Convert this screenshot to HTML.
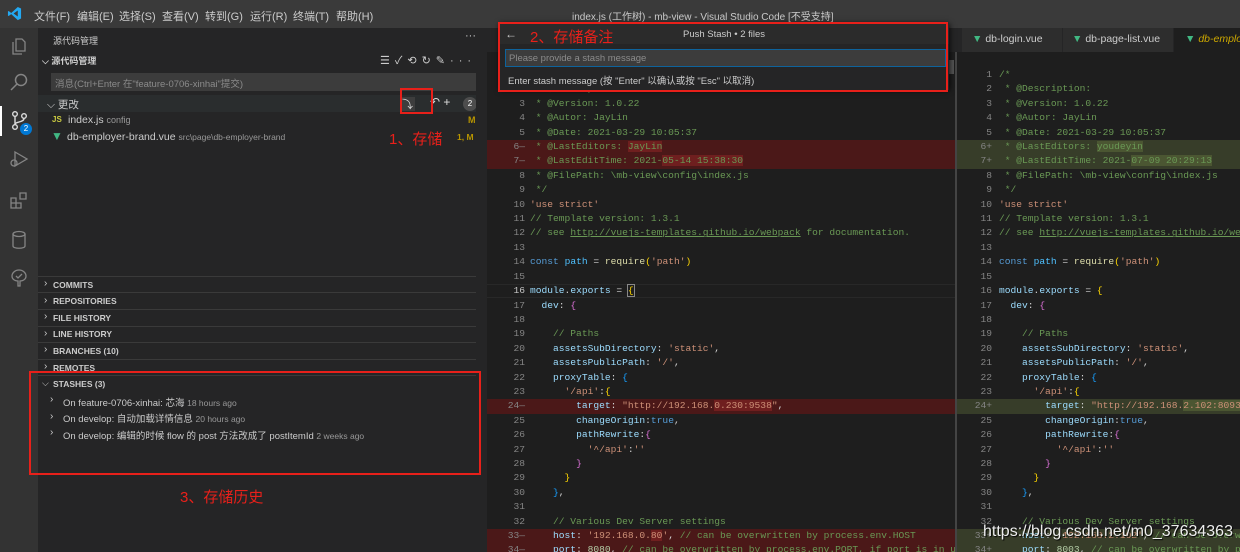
<!DOCTYPE html>
<html style="overflow:hidden"><head><meta charset="utf-8"><style>
*{margin:0;padding:0;box-sizing:border-box}
body{width:1240px;height:552px;overflow:hidden;background:#1e1e1e;font-family:"Liberation Sans","Noto Sans CJK SC",sans-serif;color:#ccc;position:relative}
.a{position:absolute}
.title{left:0;top:0;width:1240px;height:28px;background:#3a3a3a;font-size:11px;color:#ccc}
.title span{position:absolute;top:8px}
.act{left:0;top:28px;width:38px;height:524px;background:#333}
.side{left:38px;top:28px;width:449px;height:524px;background:#252526}
.t{position:absolute;white-space:nowrap}
pre{position:absolute;font-family:"Liberation Mono",monospace;font-size:9.6px;line-height:14.4px;color:#d4d4d4}
.c{color:#6a9955}.s{color:#ce9178}.k{color:#569cd6}.v{color:#9cdcfe}.f{color:#dcdcaa}.m{color:#4fc1ff}.y{color:#ffd700}.p{color:#da70d6}.b{color:#179fff}.n{color:#b5cea8}
.ln{color:#858585;text-align:right}
.hdr{font-size:8.5px;font-weight:bold;color:#ccc;position:absolute;left:53px}
.sep{position:absolute;left:38px;width:438px;height:1px;background:#3a3a3a}
.clip{position:absolute;overflow:hidden}
</style></head><body>
<div class="a title">
<svg class="a" style="left:7px;top:6px" width="15" height="15" viewBox="0 0 16 16"><path d="M11.5 1 L15 2.7 V13.3 L11.5 15 L4.5 8.6 L1.8 10.7 L1 10.2 V5.8 L1.8 5.3 L4.5 7.4 Z M11.5 4.8 L7 8 L11.5 11.2Z" fill="#23a9f2"/></svg>
<span style="left:34px">文件(F)</span><span style="left:77px">编辑(E)</span><span style="left:119px">选择(S)</span><span style="left:162px">查看(V)</span><span style="left:205px">转到(G)</span><span style="left:250px">运行(R)</span><span style="left:293px">终端(T)</span><span style="left:336px">帮助(H)</span>
<span style="left:572px;font-size:10px">index.js (工作树) - mb-view - Visual Studio Code [不受支持]</span>
</div>
<div class="a act">
<svg class="a" style="left:9px;top:8px" width="20" height="20" viewBox="0 0 20 20" fill="none" stroke="#858585" stroke-width="1.3"><path d="M7 3h6l3 3v9H7z M4 6v12h9"/></svg>
<svg class="a" style="left:9px;top:44px" width="20" height="20" viewBox="0 0 20 20" fill="none" stroke="#858585" stroke-width="1.5"><circle cx="12" cy="8" r="5.5"/><path d="M8 12l-6 6"/></svg>
<div class="a" style="left:0;top:78px;width:2px;height:30px;background:#fff"></div>
<svg class="a" style="left:10px;top:82px" width="20" height="22" viewBox="0 0 20 22" fill="none" stroke="#ddd" stroke-width="1.4"><circle cx="5" cy="4" r="2.3"/><circle cx="14" cy="6" r="2.3"/><circle cx="5" cy="17" r="2.3"/><path d="M5 6.5v8 M14 8.5c0 4-9 3-9 6"/></svg>
<div class="a" style="left:20px;top:95px;width:12px;height:12px;border-radius:6px;background:#0078d4;font-size:8px;color:#fff;text-align:center;line-height:12px">2</div>
<svg class="a" style="left:9px;top:121px" width="20" height="20" viewBox="0 0 20 20" fill="none" stroke="#858585" stroke-width="1.3"><path d="M6 3l12 7-12 7z"/><circle cx="5" cy="14" r="3"/></svg>
<svg class="a" style="left:9px;top:162px" width="20" height="20" viewBox="0 0 20 20" fill="none" stroke="#858585" stroke-width="1.3"><path d="M2 8h5v5H2z M7 13h5v5H7z M2 13h5v5H2z M11 3h6v6h-6z"/></svg>
<svg class="a" style="left:10px;top:202px" width="18" height="20" viewBox="0 0 18 20" fill="none" stroke="#858585" stroke-width="1.3"><ellipse cx="9" cy="4" rx="6" ry="2.5"/><path d="M3 4v12c0 3 12 3 12 0V4"/></svg>
<svg class="a" style="left:9px;top:240px" width="20" height="20" viewBox="0 0 20 20" fill="none" stroke="#858585" stroke-width="1.3"><path d="M10 2c4 0 7 3 7 6 0 4-4 5-6 5v5H9v-5c-2 0-6-1-6-5 0-3 3-6 7-6z M7 8l2 2 4-4"/></svg>
</div>
<div class="a side">
<div class="t" style="left:15px;top:6px;font-size:9px">源代码管理</div>
<div class="t" style="left:427px;top:2px;font-size:11px">···</div>
<div class="t" style="left:4px;top:26px;font-size:9px;font-weight:bold">⌵ 源代码管理</div>
<div class="t" style="left:342px;top:24px;font-size:11px;color:#ccc;letter-spacing:5px">☰✓⟲↻✎···</div>
<div class="a" style="left:13px;top:45px;width:425px;height:18px;background:#3c3c3c"></div>
<div class="t" style="left:17px;top:48px;font-size:9.5px;color:#8b8b8b">消息(Ctrl+Enter 在"feature-0706-xinhai"提交)</div>
<div class="a" style="left:0;top:67px;width:449px;height:17px;background:#2a2d2e"></div>
<div class="t" style="left:9px;top:69px;font-size:10.5px">⌵ 更改</div>
<div class="a" style="left:363px;top:69px;width:14px;height:14px;background:#3d3d3d"></div>
<div class="t" style="left:364px;top:68px;font-size:11px;color:#ddd">⤵</div>
<div class="t" style="left:392px;top:67px;font-size:12px;color:#ddd">↶ +</div>
<div class="a" style="left:425px;top:69px;width:14px;height:14px;border-radius:7px;background:#4d4d4d;font-size:8px;color:#fff;text-align:center;line-height:14px">2</div>
<div class="t" style="left:14px;top:87px;font-size:8px;font-weight:bold;color:#cbcb41">JS</div>
<div class="t" style="left:30px;top:86px;font-size:10.5px">index.js <span style="font-size:9px;color:#999">config</span></div>
<div class="t" style="left:430px;top:87px;font-size:9px;font-weight:bold;color:#b89500">M</div>
<div class="t" style="left:13px;top:101px;font-size:12px;color:#41b883">▼</div>
<div class="t" style="left:29px;top:103px;font-size:10.5px">db-employer-brand.vue <span style="font-size:8.5px;color:#999">src\page\db-employer-brand</span></div>
<div class="t" style="left:419px;top:104px;font-size:8.5px;font-weight:bold;color:#b89500">1, M</div>
<div class="a" style="left:438px;top:0;width:11px;height:524px;background:#252526"></div>
</div>
<div class="sep" style="top:276px"></div><div class="sep" style="top:292px"></div><div class="sep" style="top:309px"></div><div class="sep" style="top:326px"></div><div class="sep" style="top:342px"></div><div class="sep" style="top:359px"></div><div class="sep" style="top:375px"></div>
<div class="t" style="left:44px;top:278px;font-size:10px">›</div><div class="hdr" style="top:280px">COMMITS</div>
<div class="t" style="left:44px;top:295px;font-size:10px">›</div><div class="hdr" style="top:296px">REPOSITORIES</div>
<div class="t" style="left:44px;top:311px;font-size:10px">›</div><div class="hdr" style="top:313px">FILE HISTORY</div>
<div class="t" style="left:44px;top:328px;font-size:10px">›</div><div class="hdr" style="top:329px">LINE HISTORY</div>
<div class="t" style="left:44px;top:344px;font-size:10px">›</div><div class="hdr" style="top:346px">BRANCHES (10)</div>
<div class="t" style="left:44px;top:361px;font-size:10px">›</div><div class="hdr" style="top:363px">REMOTES</div>
<div class="t" style="left:42px;top:378px;font-size:9px">⌵</div><div class="hdr" style="top:379px">STASHES (3)</div>
<div class="t" style="left:50px;top:394px;font-size:10px">›</div><div class="t" style="left:63px;top:395px;font-size:9.5px">On feature-0706-xinhai: 芯海 <span style="font-size:8.5px;color:#999">18 hours ago</span></div>
<div class="t" style="left:50px;top:411px;font-size:10px">›</div><div class="t" style="left:63px;top:411px;font-size:9.5px">On develop: 自动加载详情信息 <span style="font-size:8.5px;color:#999">20 hours ago</span></div>
<div class="t" style="left:50px;top:427px;font-size:10px">›</div><div class="t" style="left:63px;top:428px;font-size:9.5px">On develop: 编辑的时候 flow 的 post 方法改成了 postItemId <span style="font-size:8.5px;color:#999">2 weeks ago</span></div>

<!-- editors -->
<div class="a" style="left:487px;top:28px;width:753px;height:24px;background:#252526"></div>
<div class="a" style="left:962px;top:28px;width:100px;height:24px;background:#2d2d2d"></div>
<div class="a" style="left:1063px;top:28px;width:110px;height:24px;background:#2d2d2d"></div>
<div class="a" style="left:1174px;top:28px;width:66px;height:24px;background:#1e1e1e"></div>
<div class="clip" style="left:962px;top:28px;width:278px;height:24px">
<div class="t" style="left:10px;top:5px;font-size:10.5px"><span style="color:#41b883">▼</span> db-login.vue</div>
<div class="t" style="left:110px;top:5px;font-size:10.5px"><span style="color:#41b883">▼</span> db-page-list.vue</div>
<div class="t" style="left:223px;top:5px;font-size:10.5px;color:#cca700;font-style:italic"><span style="color:#41b883;font-style:normal">▼</span> db-employer</div>
</div>
<div class="a" style="left:955px;top:52px;width:2px;height:500px;background:#444"></div>
<div class="a" style="left:948px;top:60px;width:6px;height:14px;background:#555"></div>

<div class="clip" style="left:487px;top:52px;width:468px;height:500px">
<div class="a" style="left:0;top:88px;width:468px;height:28.8px;background:#4b1818"></div>
<div class="a" style="left:0;top:347.2px;width:468px;height:14.4px;background:#4b1818"></div>
<div class="a" style="left:0;top:476.8px;width:468px;height:28.8px;background:#4b1818"></div>
<div class="a" style="left:0;top:232px;width:468px;height:14.4px;border-top:1px solid #282828;border-bottom:1px solid #282828"></div>
<pre class="ln" style="left:8px;top:16px;width:30px">1
2
3
4
5
6—
7—
8
9
10
11
12
13
14
15
<span style="color:#c6c6c6">16</span>
17
18
19
20
21
22
23
24—
25
26
27
28
29
30
31
32
33—
34—</pre>
<pre style="left:43px;top:16px"><span class="c">/*
 * @Description:
 * @Version: 1.0.22
 * @Autor: JayLin
 * @Date: 2021-03-29 10:05:37
 * @LastEditors: <span style="background:#6f1f1f">JayLin</span>
 * @LastEditTime: 2021-<span style="background:#6f1f1f">05-14 15:38:30</span>
 * @FilePath: \mb-view\config\index.js
 */</span>
<span class="s">'use strict'</span>
<span class="c">// Template version: 1.3.1</span>
<span class="c">// see <u>http://vuejs-templates.github.io/webpack</u> for documentation.</span>

<span class="k">const</span> <span class="m">path</span> = <span class="f">require</span><span class="y">(</span><span class="s">'path'</span><span class="y">)</span>

<span class="v">module</span>.<span class="v">exports</span> = <span class="y" style="outline:1px solid #888">{</span>
  <span class="v">dev</span>: <span class="p">{</span>

    <span class="c">// Paths</span>
    <span class="v">assetsSubDirectory</span>: <span class="s">'static'</span>,
    <span class="v">assetsPublicPath</span>: <span class="s">'/'</span>,
    <span class="v">proxyTable</span>: <span class="b">{</span>
      <span class="s">'/api'</span>:<span class="y">{</span>
        <span class="v">target</span>: <span class="s">"http://192.168.<span style="background:#6f1f1f">0.230:9538</span>"</span>,
        <span class="v">changeOrigin</span>:<span class="k">true</span>,
        <span class="v">pathRewrite</span>:<span class="p">{</span>
          <span class="s">'^/api'</span>:<span class="s">''</span>
        <span class="p">}</span>
      <span class="y">}</span>
    <span class="b">}</span>,

    <span class="c">// Various Dev Server settings</span>
    <span class="v">host</span>: <span class="s">'192.168.0.<span style="background:#6f1f1f">80</span>'</span>, <span class="c">// can be overwritten by process.env.HOST</span>
    <span class="v">port</span>: <span class="n">8080</span>, <span class="c">// can be overwritten by process.env.PORT, if port is in use</span></pre>
</div>

<div class="clip" style="left:957px;top:52px;width:283px;height:500px">
<div class="a" style="left:0;top:88px;width:283px;height:28.8px;background:#373d29"></div>
<div class="a" style="left:0;top:347.2px;width:283px;height:14.4px;background:#373d29"></div>
<div class="a" style="left:0;top:476.8px;width:283px;height:28.8px;background:#373d29"></div>
<pre class="ln" style="left:5px;top:16px;width:30px">1
2
3
4
5
6+
7+
8
9
10
11
12
13
14
15
16
17
18
19
20
21
22
23
24+
25
26
27
28
29
30
31
32
33+
34+</pre>
<pre style="left:42px;top:16px"><span class="c">/*
 * @Description:
 * @Version: 1.0.22
 * @Autor: JayLin
 * @Date: 2021-03-29 10:05:37
 * @LastEditors: <span style="background:#4b5632">youdeyin</span>
 * @LastEditTime: 2021-<span style="background:#4b5632">07-09 20:29:13</span>
 * @FilePath: \mb-view\config\index.js
 */</span>
<span class="s">'use strict'</span>
<span class="c">// Template version: 1.3.1</span>
<span class="c">// see <u>http://vuejs-templates.github.io/webpack</u> for documentation.</span>

<span class="k">const</span> <span class="m">path</span> = <span class="f">require</span><span class="y">(</span><span class="s">'path'</span><span class="y">)</span>

<span class="v">module</span>.<span class="v">exports</span> = <span class="y">{</span>
  <span class="v">dev</span>: <span class="p">{</span>

    <span class="c">// Paths</span>
    <span class="v">assetsSubDirectory</span>: <span class="s">'static'</span>,
    <span class="v">assetsPublicPath</span>: <span class="s">'/'</span>,
    <span class="v">proxyTable</span>: <span class="b">{</span>
      <span class="s">'/api'</span>:<span class="y">{</span>
        <span class="v">target</span>: <span class="s">"http://192.168.<span style="background:#4b5632">2.102:8093</span>"</span>,
        <span class="v">changeOrigin</span>:<span class="k">true</span>,
        <span class="v">pathRewrite</span>:<span class="p">{</span>
          <span class="s">'^/api'</span>:<span class="s">''</span>
        <span class="p">}</span>
      <span class="y">}</span>
    <span class="b">}</span>,

    <span class="c">// Various Dev Server settings</span>
    <span class="v">host</span>: <span class="s">'192.168.2.102'</span>, <span class="c">// can be overwritten by process.env.HOST</span>
    <span class="v">port</span>: <span class="n">8003</span>, <span class="c">// can be overwritten by process.env.PORT</span></pre>
</div>

<!-- quick pick -->
<div class="a" style="left:500px;top:24px;width:449px;height:66px;background:#252526;box-shadow:0 0 6px #000"></div>
<div class="a" style="left:500px;top:24px;width:449px;height:20px;background:#2b2b2b"></div>
<div class="t" style="left:505px;top:27px;font-size:12px;color:#ccc">←</div>
<div class="t" style="left:683px;top:29px;font-size:9.5px">Push Stash • 2 files</div>
<div class="a" style="left:505px;top:49px;width:441px;height:18px;background:#3c3c3c;border:1px solid #0e639c"></div>
<div class="t" style="left:509px;top:53px;font-size:9.5px;color:#8b8b8b">Please provide a stash message</div>
<div class="t" style="left:508px;top:73px;font-size:9.5px">Enter stash message (按 "Enter" 以确认或按 "Esc" 以取消)</div>

<!-- annotations -->
<div class="a" style="left:498px;top:22px;width:450px;height:70px;border:2px solid #e8201a"></div>
<div class="t" style="left:530px;top:26px;font-size:15px;color:#e8201a">2、存储备注</div>
<div class="a" style="left:400px;top:88px;width:33px;height:26px;border:2px solid #e8201a"></div>
<div class="t" style="left:389px;top:128px;font-size:15px;color:#e8201a">1、存储</div>
<div class="a" style="left:29px;top:371px;width:452px;height:104px;border:2px solid #e8201a"></div>
<div class="t" style="left:180px;top:486px;font-size:15px;color:#e8201a">3、存储历史</div>
<div class="t" style="left:983px;top:523px;font-size:16px;color:#eee;text-shadow:1px 1px 1px #000">https://blog.csdn.net/m0_37634363</div>
</body></html>
